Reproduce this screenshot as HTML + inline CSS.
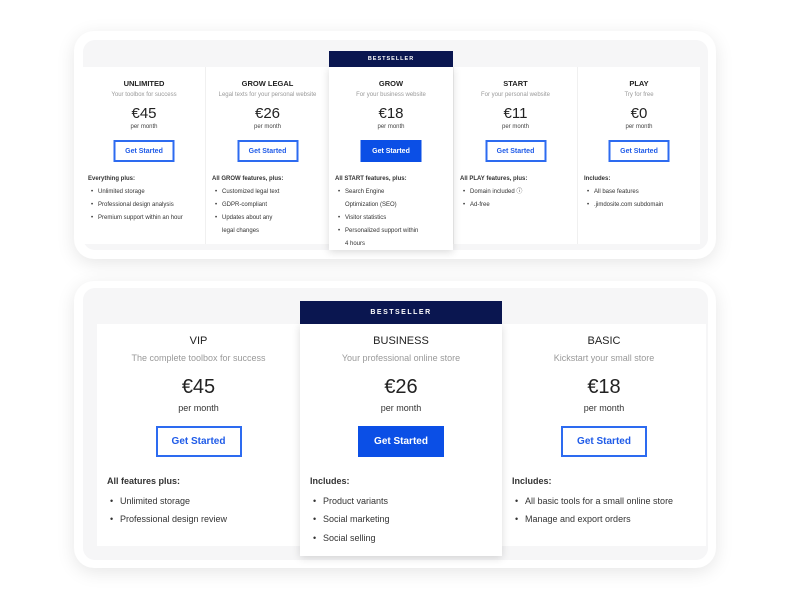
<!DOCTYPE html>
<html><head><meta charset="utf-8"><style>
*{margin:0;padding:0;box-sizing:border-box}
body{width:791px;height:600px;background:#fff;font-family:"Liberation Sans",sans-serif;color:#222;position:relative;overflow:hidden}
.outer{position:absolute;background:#fff;border-radius:20px;box-shadow:0 4px 18px rgba(0,0,0,.10)}
.inner{position:absolute;background:#f6f6f7;border-radius:12px}
.col{position:absolute;background:#fff;text-align:center}
.sep{border-left:1px solid #f0f0f0}
.hl{box-shadow:0 2px 8px rgba(0,0,0,.15)}
.hdr{position:absolute;background:#0a1650;color:#fff;font-weight:bold;text-align:center}
.t{position:absolute;left:0;right:0}
.btn{position:absolute;left:50%;transform:translateX(-50%);border:2px solid #2d6bf0;color:#1f5be8;font-weight:bold;display:flex;align-items:center;justify-content:center}
.btn.f{background:#0b4fe6;border-color:#0b4fe6;color:#fff}
.feat{position:absolute;text-align:left}
.feat b{display:block}
.feat div{position:relative}
.feat div:before{content:"•";position:absolute}
.s .t1{top:12px;font-size:7.5px;font-weight:bold}
.s .t2{top:25px;font-size:6px;color:#999}
.s .t3{top:38px;font-size:15px}
.s .t4{top:57px;font-size:6px;color:#444}
.s .btn{top:73px;width:61px;height:22px;font-size:7px}
.s .feat{top:106px;left:6px;font-size:6px;line-height:13px;color:#333}
.s .feat div{padding-left:10px}
.s .feat div:before{left:3px}
.l .t1{top:11px;font-size:11px}
.l .t2{top:29px;font-size:9px;color:#999}
.l .t3{top:52px;font-size:20px}
.l .t4{top:79px;font-size:9px;color:#333}
.l .btn{top:102px;width:86px;height:31px;font-size:10px}
.l .feat{top:148px;left:10px;font-size:9px;line-height:18.5px;color:#333}
.l .feat b{margin-bottom:1px}
.l .feat div{padding-left:13px}
.l .feat div:before{left:3px}
</style></head><body>
<div class="outer" style="left:74px;top:31px;width:642px;height:228px"></div>
<div class="inner" style="left:83px;top:40px;width:625px;height:210px"></div>

<div class="col s" style="left:83px;top:67px;width:122px;height:177px">
<div class="t t1">UNLIMITED</div><div class="t t2">Your toolbox for success</div><div class="t t3">€45</div><div class="t t4">per month</div><div class="btn">Get Started</div>
<div class="feat" style="left:5px"><b>Everything plus:</b><div>Unlimited storage</div><div>Professional design analysis</div><div>Premium support within an hour</div></div></div>
<div class="col s sep" style="left:205px;top:67px;width:124px;height:177px">
<div class="t t1">GROW LEGAL</div><div class="t t2">Legal texts for your personal website</div><div class="t t3">€26</div><div class="t t4">per month</div><div class="btn">Get Started</div>
<div class="feat"><b>All GROW features, plus:</b><div>Customized legal text</div><div>GDPR-compliant</div><div>Updates about any<br>legal changes</div></div></div>
<div class="col s sep" style="left:453px;top:67px;width:124px;height:177px">
<div class="t t1">START</div><div class="t t2">For your personal website</div><div class="t t3">€11</div><div class="t t4">per month</div><div class="btn">Get Started</div>
<div class="feat"><b>All PLAY features, plus:</b><div>Domain included ⓘ</div><div>Ad-free</div></div></div>
<div class="col s sep" style="left:577px;top:67px;width:123px;height:177px">
<div class="t t1">PLAY</div><div class="t t2">Try for free</div><div class="t t3">€0</div><div class="t t4">per month</div><div class="btn">Get Started</div>
<div class="feat"><b>Includes:</b><div>All base features</div><div>.jimdosite.com subdomain</div></div></div>
<div class="col s hl" style="left:329px;top:67px;width:124px;height:183px">
<div class="t t1">GROW</div><div class="t t2">For your business website</div><div class="t t3">€18</div><div class="t t4">per month</div><div class="btn f">Get Started</div>
<div class="feat"><b>All START features, plus:</b><div>Search Engine<br>Optimization (SEO)</div><div>Visitor statistics</div><div>Personalized support within<br>4 hours</div></div></div>
<div class="hdr" style="left:329px;top:51px;width:124px;height:16px;font-size:5.5px;line-height:16px;letter-spacing:1px">BESTSELLER</div>

<div class="outer" style="left:74px;top:281px;width:642px;height:287px"></div>
<div class="inner" style="left:83px;top:288px;width:625px;height:272px"></div>
<div class="col l" style="left:97px;top:324px;width:203px;height:222px">
<div class="t t1">VIP</div><div class="t t2">The complete toolbox for success</div><div class="t t3">€45</div><div class="t t4">per month</div><div class="btn">Get Started</div>
<div class="feat"><b>All features plus:</b><div>Unlimited storage</div><div>Professional design review</div></div></div>
<div class="col l" style="left:502px;top:324px;width:204px;height:222px">
<div class="t t1">BASIC</div><div class="t t2">Kickstart your small store</div><div class="t t3">€18</div><div class="t t4">per month</div><div class="btn">Get Started</div>
<div class="feat"><b>Includes:</b><div>All basic tools for a small online store</div><div>Manage and export orders</div></div></div>
<div class="col l hl" style="left:300px;top:324px;width:202px;height:232px">
<div class="t t1">BUSINESS</div><div class="t t2">Your professional online store</div><div class="t t3">€26</div><div class="t t4">per month</div><div class="btn f">Get Started</div>
<div class="feat"><b>Includes:</b><div>Product variants</div><div>Social marketing</div><div>Social selling</div></div></div>
<div class="hdr" style="left:300px;top:301px;width:202px;height:23px;font-size:7px;line-height:23px;letter-spacing:1.5px">BESTSELLER</div>
</body></html>
